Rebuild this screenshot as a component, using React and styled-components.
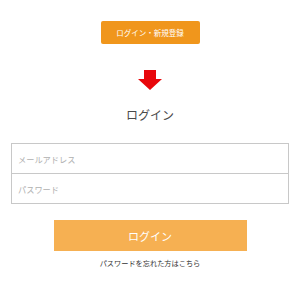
import React from 'react';
import styled, { createGlobalStyle } from 'styled-components';

const GlobalStyle = createGlobalStyle`
  body {
    margin: 0;
    background: #ffffff;
    font-family: "Noto Sans CJK JP", "Noto Sans", sans-serif;
  }
`;

const Page = styled.div`
  width: 300px;
  height: 281px;
  display: flex;
  flex-direction: column;
  align-items: center;
  padding-top: 21px;
  box-sizing: border-box;
`;

const TopButton = styled.button`
  width: 99px;
  height: 23px;
  border: none;
  border-radius: 2px;
  background: #f0961c;
  color: #ffffff;
  font-family: inherit;
  font-size: 7.5px;
  padding: 0;
  cursor: pointer;
`;

const Arrow = styled.svg`
  display: block;
  margin-top: 26px;
`;

const Heading = styled.h2`
  margin: 17px 0 0;
  font-size: 12px;
  font-weight: 400;
  color: #4a4a4a;
  line-height: 16px;
`;

const Fields = styled.div`
  margin-top: 20px;
  width: 276px;
  border: 1px solid #c8c8c8;
  display: flex;
  flex-direction: column;
`;

const Field = styled.input`
  height: 29px;
  border: none;
  border-top: ${(p) => (p.$first ? 'none' : '1px solid #c8c8c8')};
  padding: 0 6px;
  font-family: inherit;
  font-size: 8.2px;
  color: #333;
  outline: none;
  &::placeholder {
    color: #b0b0b0;
  }
`;

const LoginButton = styled.button`
  margin-top: 16px;
  width: 193px;
  height: 31px;
  border: none;
  background: #f6b052;
  color: #ffffff;
  font-family: inherit;
  font-size: 11px;
  padding: 0;
  cursor: pointer;
`;

const Forgot = styled.a`
  margin-top: 7px;
  font-size: 7.2px;
  color: #333333;
  text-decoration: none;
`;

const App = () => {
  return (
    <>
      <GlobalStyle />
      <Page>
        <TopButton>ログイン・新規登録</TopButton>
        <Arrow width="24" height="20" viewBox="0 0 24 20">
          <path d="M6 0 H18 V9 H24 L12 20 L0 9 H6 Z" fill="#e8070b" />
        </Arrow>
        <Heading>ログイン</Heading>
        <Fields>
          <Field $first placeholder="メールアドレス" />
          <Field type="password" placeholder="パスワード" />
        </Fields>
        <LoginButton>ログイン</LoginButton>
        <Forgot href="#">パスワードを忘れた方はこちら</Forgot>
      </Page>
    </>
  );
};

export default App;
